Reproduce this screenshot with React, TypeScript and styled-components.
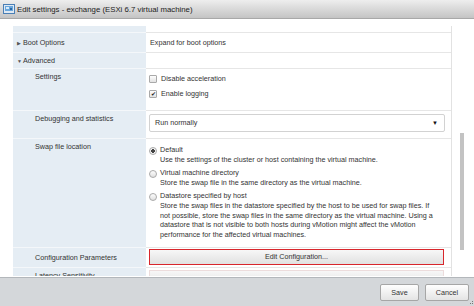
import React from "react";
import styled, { createGlobalStyle } from "styled-components";

const GlobalStyle = createGlobalStyle`
  html, body {
    margin: 0;
    padding: 0;
    background: #fff;
  }
  body {
    font-family: "Liberation Sans", Arial, sans-serif;
    font-size: 7.2px;
    color: #333;
  }
`;

const Dialog = styled.div`
  position: relative;
  width: 474px;
  height: 306px;
  display: flex;
  flex-direction: column;
  overflow: hidden;
  background: #fff;
`;

const TitleBar = styled.div`
  height: 18px;
  flex-shrink: 0;
  border-bottom: 1px solid #a8a8a8;
  background: linear-gradient(#eeeeee, #c4c4c4);
  display: flex;
  align-items: center;
  gap: 2px;
  padding-left: 3px;
  font-size: 7.8px;
  color: #222;
`;

const Body = styled.div`
  display: flex;
  height: 258px;
  padding-top: 7px;
  box-sizing: border-box;
`;

const Viewport = styled.div`
  flex: 1;
  margin-left: 13px;
  height: 250px;
  overflow: hidden;
  border-right: 1px solid #e2e2e2;
`;

// scrolled down: the top row is mostly hidden
const Table = styled.div`
  margin-top: -13px;
`;

const Row = styled.div<{ $h: number }>`
  display: grid;
  grid-template-columns: 133px 1fr;
  height: ${(p) => p.$h}px;
`;

const LabelCell = styled.div<{ $indent?: boolean; $center?: boolean }>`
  background: #e5edf4;
  border-bottom: 1px solid #f4f7fa;
  padding-left: ${(p) => (p.$indent ? 22 : 4)}px;
  padding-top: ${(p) => (p.$center ? 0 : 3)}px;
  display: flex;
  align-items: ${(p) => (p.$center ? "center" : "flex-start")};
  gap: 3px;
  line-height: 10px;
  white-space: nowrap;
`;

const ValueCell = styled.div<{ $pt?: number }>`
  border-bottom: 1px solid #e6e6e6;
  padding: ${(p) => p.$pt ?? 0}px 5px 0 3px;
  display: flex;
  flex-direction: column;
  line-height: 10px;
`;

const PlainValue = styled(ValueCell)`
  justify-content: center;
  padding-left: 4px;
`;

const Caret = styled.span`
  font-size: 5px;
  color: #555;
  width: 3px;
`;

const CheckList = styled.div`
  display: flex;
  flex-direction: column;
  gap: 5px;
`;

const CheckLine = styled.label`
  display: flex;
  align-items: center;
  gap: 4px;
  height: 10px;
`;

const Box = styled.span`
  width: 6px;
  height: 6px;
  border: 1px solid #a9a9a9;
  border-radius: 1px;
  background: linear-gradient(#fdfdfd, #e2e2e2);
  display: flex;
  align-items: center;
  justify-content: center;
  font-size: 6px;
  line-height: 6px;
  color: #222;
`;

const Select = styled.div`
  height: 16px;
  margin-right: 1px;
  border: 1px solid #d2d2d2;
  border-radius: 2px;
  background: #fff;
  display: flex;
  align-items: center;
  justify-content: space-between;
  padding: 0 6px 0 5px;
`;

const Arrow = styled.span`
  font-size: 6px;
  color: #111;
`;

const RadioList = styled.div`
  display: flex;
  flex-direction: column;
  gap: 4px;
`;

const RadioOption = styled.div`
  display: grid;
  grid-template-columns: 11px 1fr;
  line-height: 9.6px;
`;

const Dot = styled.span<{ $on?: boolean }>`
  width: 6px;
  height: 6px;
  margin-top: 1.5px;
  border: 1px solid #a9a9a9;
  border-radius: 50%;
  background: ${(p) =>
    p.$on
      ? "radial-gradient(circle, #444 0 1.6px, #f4f4f4 2px)"
      : "linear-gradient(#fdfdfd, #e0e0e0)"};
`;

const Desc = styled.div`
  grid-column: 2;
  padding-right: 9px;
`;

const ConfigButton = styled.div<{ $alert?: boolean }>`
  height: 14px;
  margin: 1px 2px 0 0;
  border: 1.5px solid ${(p) => (p.$alert ? "#d8262c" : "#ecdcdc")};
  background: linear-gradient(#f7f7f7, #e1e1e1);
  display: flex;
  align-items: center;
  justify-content: center;
  color: #333;
`;

const ScrollColumn = styled.div`
  width: 22px;
  flex-shrink: 0;
`;

const Thumb = styled.div`
  width: 4px;
  height: 117px;
  margin: 107px 0 0 8px;
  background: #c3c3c3;
`;

const Footer = styled.div`
  flex: 1;
  border-top: 1px solid #b3b7bb;
  background: #d4d7da;
  display: flex;
  align-items: center;
  justify-content: flex-end;
  gap: 6px;
  padding-right: 5px;
`;

const FooterButton = styled.button<{ $w: number }>`
  width: ${(p) => p.$w}px;
  height: 17px;
  padding: 0;
  font-family: inherit;
  font-size: 7.2px;
  color: #333;
  border: 1px solid #a6a6a6;
  border-radius: 2px;
  background: linear-gradient(#fefefe, #e4e4e4);
`;

const Grip = styled.svg`
  position: absolute;
  right: 1px;
  bottom: 1px;
`;

const VmIcon = () => (
  <svg width="12" height="12" viewBox="0 0 12 12">
    <rect x="0.5" y="1.5" width="11" height="9" fill="#dfe9f3" stroke="#4a7fb5" />
    <rect x="2" y="3" width="8" height="5" fill="#6aa7dd" />
    <rect x="3" y="4" width="3" height="2" fill="#d8ecfb" />
    <rect x="7" y="5" width="2" height="2" fill="#2d6aa6" />
  </svg>
);

const App: React.FC = () => {
  return (
    <>
      <GlobalStyle />
      <Dialog>
        <TitleBar>
          <VmIcon />
          <span>Edit settings - exchange (ESXi 6.7 virtual machine)</span>
        </TitleBar>
        <Body>
          <Viewport>
            <Table>
              <Row $h={20}>
                <LabelCell />
                <ValueCell />
              </Row>
              <Row $h={20}>
                <LabelCell $center>
                  <Caret>▶</Caret>
                  Boot Options
                </LabelCell>
                <PlainValue>Expand for boot options</PlainValue>
              </Row>
              <Row $h={16}>
                <LabelCell $center>
                  <Caret>▼</Caret>
                  Advanced
                </LabelCell>
                <ValueCell />
              </Row>
              <Row $h={42}>
                <LabelCell $indent>Settings</LabelCell>
                <ValueCell $pt={5}>
                  <CheckList>
                    <CheckLine>
                      <Box />
                      Disable acceleration
                    </CheckLine>
                    <CheckLine>
                      <Box>✔</Box>
                      Enable logging
                    </CheckLine>
                  </CheckList>
                </ValueCell>
              </Row>
              <Row $h={28}>
                <LabelCell $indent>Debugging and statistics</LabelCell>
                <ValueCell $pt={3}>
                  <Select>
                    Run normally
                    <Arrow>▼</Arrow>
                  </Select>
                </ValueCell>
              </Row>
              <Row $h={109}>
                <LabelCell $indent>Swap file location</LabelCell>
                <ValueCell $pt={6}>
                  <RadioList>
                    <RadioOption>
                      <Dot $on />
                      <span>Default</span>
                      <Desc>Use the settings of the cluster or host containing the virtual machine.</Desc>
                    </RadioOption>
                    <RadioOption>
                      <Dot />
                      <span>Virtual machine directory</span>
                      <Desc>Store the swap file in the same directory as the virtual machine.</Desc>
                    </RadioOption>
                    <RadioOption>
                      <Dot />
                      <span>Datastore specified by host</span>
                      <Desc>
                        Store the swap files in the datastore specified by the host to be used for swap files. If
                        not possible, store the swap files in the same directory as the virtual machine. Using a
                        datastore that is not visible to both hosts during vMotion might affect the vMotion
                        performance for the affected virtual machines.
                      </Desc>
                    </RadioOption>
                  </RadioList>
                </ValueCell>
              </Row>
              <Row $h={20}>
                <LabelCell $indent $center>
                  Configuration Parameters
                </LabelCell>
                <ValueCell>
                  <ConfigButton $alert>Edit Configuration...</ConfigButton>
                </ValueCell>
              </Row>
              <Row $h={20}>
                <LabelCell $indent>Latency Sensitivity</LabelCell>
                <ValueCell $pt={1}>
                  <ConfigButton />
                </ValueCell>
              </Row>
            </Table>
          </Viewport>
          <ScrollColumn>
            <Thumb />
          </ScrollColumn>
        </Body>
        <Footer>
          <FooterButton $w={39}>Save</FooterButton>
          <FooterButton $w={44}>Cancel</FooterButton>
        </Footer>
        <Grip width="4" height="4" viewBox="0 0 4 4">
          <rect x="3" y="0" width="1" height="1" fill="#777" />
          <rect x="1" y="2" width="1" height="1" fill="#777" />
          <rect x="3" y="2" width="1" height="1" fill="#777" />
        </Grip>
      </Dialog>
    </>
  );
};

export default App;
